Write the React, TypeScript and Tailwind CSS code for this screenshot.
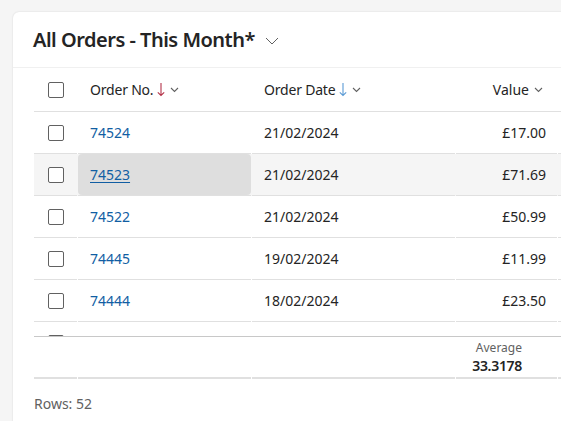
import React from "react";

const font = { fontFamily: '"Noto Sans", "Open Sans", sans-serif' };

function Checkbox() {
  return <div className="w-[16px] h-[16px] rounded-[2px] border border-[#616161] bg-white" />;
}

function SmallChevron() {
  return (
    <svg width="9" height="6" viewBox="0 0 9 6" className="ml-[5px]">
      <path d="M1 1 L4.5 4.5 L8 1" fill="none" stroke="#616161" strokeWidth="1.1" />
    </svg>
  );
}

function Arrow({ color }: { color: string }) {
  return (
    <svg width="8" height="15" viewBox="0 0 8 15" className="ml-[4px]">
      <path d="M4 1 V13.5 M0.8 10.3 L4 13.5 L7.2 10.3" fill="none" stroke={color} strokeWidth="1.1" />
    </svg>
  );
}

const rows = [
  { no: "74524", date: "21/02/2024", value: "£17.00" },
  { no: "74523", date: "21/02/2024", value: "£71.69", hover: true },
  { no: "74522", date: "21/02/2024", value: "£50.99" },
  { no: "74445", date: "19/02/2024", value: "£11.99" },
  { no: "74444", date: "18/02/2024", value: "£23.50" },
  { no: "", date: "", value: "" },
];

export default function App() {
  return (
    <div className="w-[561px] h-[421px] bg-[#f5f5f5] pt-[12px] pl-[13px] overflow-hidden text-[#242424]" style={font}>
      <div className="bg-white rounded-tl-[6px] shadow-[0_0_2px_rgba(0,0,0,0.14)] h-[420px] w-[560px]">
        <div className="h-[56px] flex items-center pl-[20px] border-b border-[#f0f0f0]">
          <span className="text-[20px] font-semibold leading-none tracking-[-0.5px]">All Orders - This Month*</span>
          <svg width="14" height="8" viewBox="0 0 14 8" className="ml-[10px] mt-[2px]">
            <path d="M1 1 L7 7 L13 1" fill="none" stroke="#616161" strokeWidth="1" />
          </svg>
        </div>
        <div className="pl-[21px]">
          <div className="flex h-[44px] border-b border-[#e0e0e0] text-[14px] items-center">
            <div className="w-[44px] flex justify-center">
              <Checkbox />
            </div>
            <div className="w-[174px] pl-[12px] flex items-center">
              <span className="tracking-[-0.2px]">Order No.</span>
              <Arrow color="#b4344a" />
              <SmallChevron />
            </div>
            <div className="w-[204px] pl-[12px] flex items-center">
              <span className="tracking-[-0.2px]">Order Date</span>
              <Arrow color="#5b9bd5" />
              <SmallChevron />
            </div>
            <div className="w-[102px] pr-[15px] flex items-center justify-end">
              <span>Value</span>
              <SmallChevron />
            </div>
          </div>
          <div className="h-[224px] overflow-hidden">
            {rows.map((r, i) => (
              <div key={i} className={`flex h-[42px] gap-px text-[14px] ${r.hover ? "bg-[#f5f5f5]" : "bg-white"}`}>
                <div className="w-[43px] pl-[1px] border-b border-[#e0e0e0] flex items-center justify-center">
                  <Checkbox />
                </div>
                <div className="w-[173px] border-b border-[#e0e0e0] flex">
                  <div className={`flex-1 flex items-center pl-[12px] rounded-[4px] ${r.hover ? "bg-[#dedede]" : ""}`}>
                    <span className={`text-[#115ea3] ${r.hover ? "underline underline-offset-2" : ""}`}>{r.no}</span>
                  </div>
                </div>
                <div className="w-[203px] border-b border-[#e0e0e0] flex items-center pl-[12px]">{r.date}</div>
                <div className="w-[101px] border-b border-[#e0e0e0] flex items-center justify-end pr-[11px]">{r.value}</div>
                <div className="flex-1 border-b border-[#e0e0e0]" />
              </div>
            ))}
          </div>
          <div className="flex h-[43px] border-t border-[#c8c8c8] gap-px">
            <div className="w-[43px] border-b-2 border-[#e0e0e0]" />
            <div className="w-[173px] border-b-2 border-[#e0e0e0]" />
            <div className="w-[203px] border-b-2 border-[#e0e0e0]" />
            <div className="w-[101px] border-b-2 border-[#e0e0e0] flex flex-col items-end justify-center pr-[35px]">
              <span className="text-[12px] text-[#616161] leading-[17px]">Average</span>
              <span className="text-[14px] font-semibold leading-[19px] tracking-[-0.3px]">33.3178</span>
            </div>
            <div className="flex-1 border-b-2 border-[#e0e0e0]" />
          </div>
          <div className="h-[48px] flex items-center text-[14px] text-[#616161]">Rows: 52</div>
        </div>
      </div>
    </div>
  );
}
